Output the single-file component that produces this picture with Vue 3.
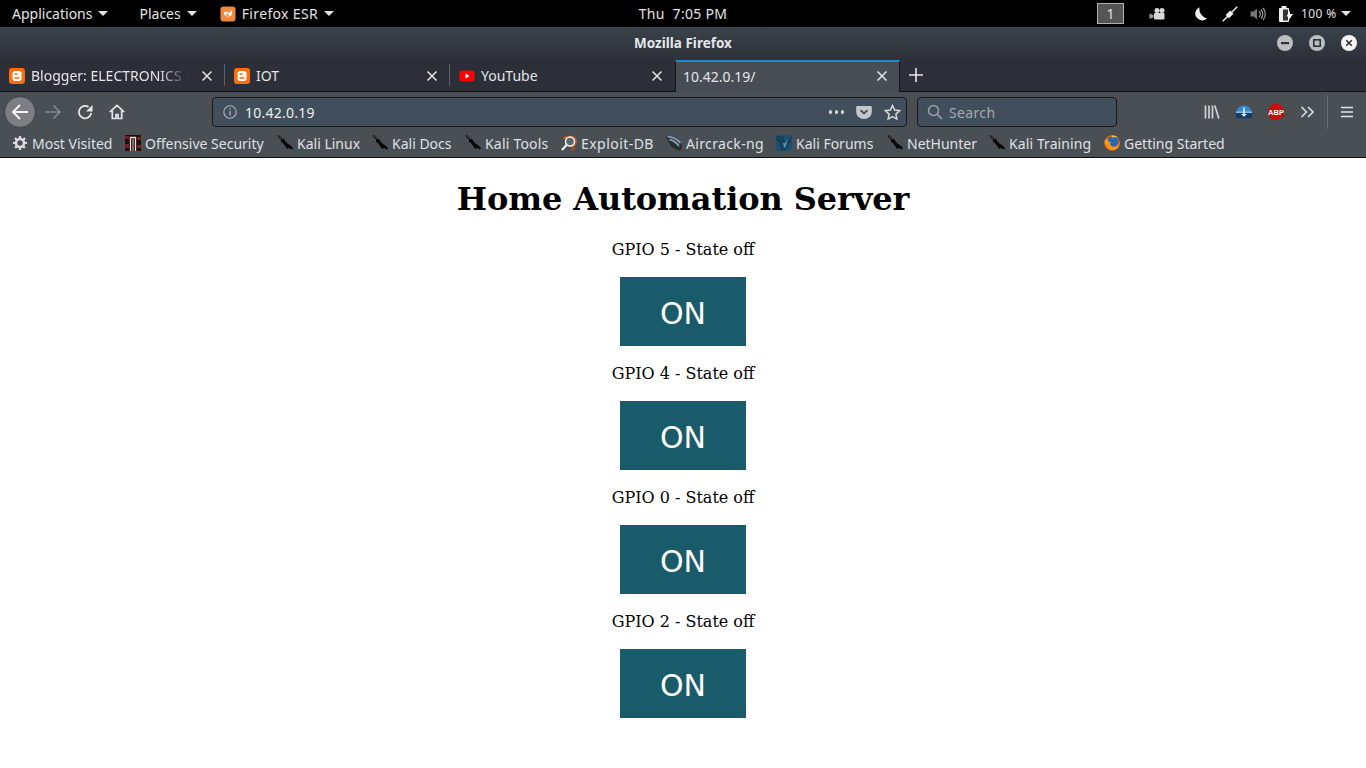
<template>
  <div class="top-panel">
    <div class="panel-left">
      <span class="menu apps">Applications<i class="caret"></i></span>
      <span class="menu places">Places<i class="caret"></i></span>
      <span class="menu ff">
        <svg width="16" height="16" viewBox="0 0 16 16"><rect x="0.500" y="0.500" width="15" height="15" rx="3" fill="#f08a3c"/><path d="M4 6.500a4 4 0 1 0 8 0c0-1-.4-2-1.200-2.700.2 1.200-.2 2.500-1.300 3-1.100.4-2.200-.1-2.500-1.300-.6.2-1.600.3-3 1z" fill="#fff"/><circle cx="7.500" cy="9" r="1.300" fill="#f08a3c"/></svg>
        <span class="ff-label">Firefox ESR</span><i class="caret"></i>
      </span>
    </div>
    <div class="clock">Thu&nbsp; 7:05 PM</div>
    <div class="panel-right">
      <span class="workspace">1</span>
      <svg class="video" width="16" height="14" viewBox="0 0 16 14"><circle cx="8" cy="3.500" r="2.500" fill="#d8d8d8"/><circle cx="13" cy="3.500" r="2.500" fill="#d8d8d8"/><rect x="5" y="6" width="10.500" height="6.500" rx="1" fill="#d8d8d8"/><path d="M0.500 6.500 4.500 8v2.500l-4 1.500z" fill="#999"/></svg>
      <svg class="moon" width="12" height="14" viewBox="0 0 12 14"><path d="M4.500.2A6.900 6.900 0 1 0 12 11.500 10 10 0 0 1 4.500.2z" fill="#eee"/></svg>
      <svg class="plug" width="16" height="16" viewBox="0 0 16 16"><path d="M.8 15.200 15.200.8" stroke="#eee" stroke-width="1.500"/><path d="M5.300 10.700 9.800 6.200" stroke="#eee" stroke-width="4.600"/></svg>
      <svg class="speaker" width="16" height="16" viewBox="0 0 16 16"><path d="M0.500 5.500h3l3.500-3v11l-3.500-3h-3z" fill="#777"/><path d="M9 5a4 4 0 0 1 0 6M11 3.500a6.500 6.500 0 0 1 0 9M13 2a9 9 0 0 1 0 12" fill="none" stroke="#999" stroke-width="1.200"/></svg>
      <svg class="battery" width="16" height="16" viewBox="0 0 16 16"><rect x="3.500" y="0" width="5" height="2" fill="#eee"/><rect x="1" y="2" width="10" height="14" rx="1" fill="#eee"/><path d="M5 3.500h5v11H5z" fill="#333"/><path d="M12 4.500l-3.500 6H11L10 15l5-7h-3z" fill="#fff"/></svg>
      <span class="percent">100 %</span><i class="caret"></i>
    </div>
  </div>

  <div class="titlebar">
    <span class="title">Mozilla Firefox</span>
    <div class="win-btns">
      <span class="win-btn"><svg width="16" height="16" viewBox="0 0 16 16"><circle cx="8" cy="8" r="8" fill="#bcbec0"/><rect x="4" y="7" width="8" height="2.200" fill="#2e3238"/></svg></span>
      <span class="win-btn"><svg width="16" height="16" viewBox="0 0 16 16"><circle cx="8" cy="8" r="8" fill="#bcbec0"/><rect x="4.800" y="4.800" width="6.400" height="6.400" fill="none" stroke="#2e3238" stroke-width="1.600"/></svg></span>
      <span class="win-btn"><svg width="16" height="16" viewBox="0 0 16 16"><circle cx="8" cy="8" r="8" fill="#f4f4f4"/><path d="M5.200 5.200l5.600 5.600M10.800 5.200l-5.600 5.600" stroke="#2e3238" stroke-width="1.600"/></svg></span>
    </div>
  </div>

  <div class="tabbar">
    <div v-for="tab in tabs" :key="tab.title" class="tab" :class="{ active: tab.active, sep: tab.sep }">
      <svg v-if="tab.icon === 'blogger'" class="fav" width="16" height="16" viewBox="0 0 16 16"><rect width="16" height="16" rx="3" fill="#ff6d0a"/><rect x="3.500" y="3" width="9" height="10" rx="2.500" fill="#fff"/><rect x="5.500" y="5.200" width="3" height="1.600" fill="#ff6d0a"/><rect x="5.500" y="9.200" width="5" height="1.600" fill="#ff6d0a"/></svg>
      <svg v-if="tab.icon === 'youtube'" class="fav" width="16" height="16" viewBox="0 0 16 16"><rect x="0.500" y="2.500" width="15" height="11" rx="3" fill="#f00"/><path d="M6.500 5.500v5l4-2.500z" fill="#fff"/></svg>
      <span class="tab-title" :class="{ fade: tab.fade }">{{ tab.title }}</span>
      <svg class="tab-close" width="12" height="12" viewBox="0 0 12 12"><path d="M1.500 1.500l9 9M10.500 1.500l-9 9" stroke="#e4e6e8" stroke-width="1.500"/></svg>
    </div>
    <svg class="new-tab" width="14" height="14" viewBox="0 0 14 14"><path d="M7 0v14M0 7h14" stroke="#e8e8e8" stroke-width="1.600"/></svg>
  </div>

  <div class="navbar">
    <span class="back">
      <svg width="20" height="20" viewBox="0 0 20 20"><path d="M18 10H3M10 3l-7 7 7 7" fill="none" stroke="#f2f2f2" stroke-width="2"/></svg>
    </span>
    <svg class="fwd" width="18" height="18" viewBox="0 0 18 18"><path d="M1 9h15M9.500 2.500 16 9l-6.500 6.500" fill="none" stroke="#85898d" stroke-width="1.600"/></svg>
    <svg class="reload" width="16" height="16" viewBox="0 0 16 16"><path d="M14.200 9A6.200 6.200 0 1 1 11.500 3" fill="none" stroke="#e8e8e8" stroke-width="1.800"/><path d="M15.500 1v6.500H9z" fill="#e8e8e8"/></svg>
    <svg class="home" width="16" height="16" viewBox="0 0 16 16"><path d="M.8 8 8 1.300 15.200 8M3.300 6.500v8h3.700V10.500h2v4h3.700v-8" fill="none" stroke="#e8e8e8" stroke-width="1.700"/></svg>
    <div class="urlbar">
      <svg width="14" height="14" viewBox="0 0 14 14"><circle cx="7" cy="7" r="6.200" fill="none" stroke="#aeb4ba" stroke-width="1.100"/><path d="M7 6v4.500M7 3.300v1.500" stroke="#aeb4ba" stroke-width="1.300"/></svg>
      <span class="url">10.42.0.19</span>
      <span class="dots"><i></i><i></i><i></i></span>
      <svg class="pocket" width="16" height="16" viewBox="0 0 16 16"><path d="M1 2h14a.8.8 0 0 1 .8.800V8a7.800 7 0 0 1-15.600 0V2.800A.8.800 0 0 1 1 2z" fill="#c4c8cc"/><path d="M4.600 6.300 8 9.500l3.400-3.200" fill="none" stroke="#46525e" stroke-width="1.900"/></svg>
      <svg class="star" width="17" height="17" viewBox="0 0 17 17"><path d="M8.500 1.500l2.100 4.600 5 .6-3.700 3.400 1 5-4.400-2.500-4.400 2.500 1-5L1.400 6.700l5-.6z" fill="none" stroke="#d4d7da" stroke-width="1.500"/></svg>
    </div>
    <div class="searchbar">
      <svg width="16" height="16" viewBox="0 0 16 16"><circle cx="6.500" cy="6.500" r="5" fill="none" stroke="#9aa2aa" stroke-width="1.500"/><path d="M10 10l5 5" stroke="#9aa2aa" stroke-width="1.700"/></svg>
      <span class="search-text">Search</span>
    </div>
    <div class="tools">
      <svg width="16" height="16" viewBox="0 0 16 16"><path d="M1.500 1.500v13M5 1.500v13M8.500 1.500v13M10.800 1.500l4 13" fill="none" stroke="#d0d2d4" stroke-width="1.700"/></svg>
      <svg width="16" height="16" viewBox="0 0 16 16"><path d="M.5 8C1 4.500 3.500 1.500 8 1.500s7 3 7.500 6.500z" fill="#3488cf"/><path d="M0 8h16v5.500l-1 1H1l-1-1z" fill="#143f66"/><path d="M0 7.500h16V9H0z" fill="#8dbadf"/><path d="M7.200 3.500h1.600v6.500H11l-3 2.800L5 10h2.200z" fill="#dfecf6"/></svg>
      <svg width="16" height="16" viewBox="0 0 16 16"><path d="M4.800 0h6.400L16 4.800v6.400L11.200 16H4.800L0 11.200V4.800z" fill="#c70d0d"/><text x="8" y="11" text-anchor="middle" class="abp">ABP</text></svg>
      <svg width="14" height="12" viewBox="0 0 14 12"><path d="M1.500 1l5 5-5 5M8 1l5 5-5 5" fill="none" stroke="#d8dadc" stroke-width="1.700"/></svg>
      <span class="tool-sep"></span>
      <svg width="12" height="12" viewBox="0 0 12 12"><path d="M0 1.500h12M0 6h12M0 10.500h12" stroke="#e4e6e8" stroke-width="1.600"/></svg>
    </div>
  </div>

  <div class="bookmarks">
    <span v-for="b in bookmarks" :key="b.name" class="bookmark">
      <svg v-if="b.icon === 'gear'" width="16" height="16" viewBox="0 0 16 16"><circle cx="8" cy="8" r="4" fill="none" stroke="#dcdcdc" stroke-width="2.600"/><path d="M8 1v14M1 8h14M3 3l10 10M13 3 3 13" stroke="#dcdcdc" stroke-width="2.200" stroke-dasharray="2.800 8.400 2.800"/></svg>
      <svg v-else-if="b.icon === 'offsec'" width="16" height="16" viewBox="0 0 16 16"><rect width="16" height="16" fill="#1f0c0d"/><path d="M0 1h4v3H0zM12 2h4v3h-4zM0 9h4v4H0zM12 10h4v3h-4z" fill="#7a1d1d"/><path d="M5.500 16V2.500h5V16" fill="none" stroke="#e8dcd8" stroke-width="1.300"/><path d="M8 4v12" stroke="#d8c4c0" stroke-width="1"/></svg>
      <svg v-else-if="b.icon === 'kali'" width="16" height="16" viewBox="0 0 16 16"><path d="M.5 0 4 1l1 1.500L7 4l2 3 2 2 2 1 3 3-1 1.500-3-1.500-2 1-2-3-2-3-2-1V4L2 3z" fill="#070707"/><path d="M2 .8 6 4" stroke="#8a8a8a" stroke-width=".7"/></svg>
      <svg v-else-if="b.icon === 'exploit'" width="16" height="16" viewBox="0 0 16 16"><path d="M2 4 4 1l3 .5L11 .5 15 3l1 4-2 4-3 2-2-1 2-8z" fill="#c9581c"/><circle cx="9" cy="6.500" r="4.500" fill="#5a6870" stroke="#f0f0f0" stroke-width="1.500"/><path d="M5.500 10 1 15" stroke="#f0f0f0" stroke-width="2.200"/><path d="M10 15.500l4-2.500" stroke="#c9581c" stroke-width="1.200"/></svg>
      <svg v-else-if="b.icon === 'aircrack'" width="16" height="16" viewBox="0 0 16 16"><path d="M0 .5C6 0 12 2 15 7.500c1.200 3 .8 6.500 0 8-5 0-10-3-12-7.500C1.500 5 .5 3 0 .5z" fill="#2a2d2a"/><path d="M1.500 1.500c5 .4 9.500 2.500 13 6.500M3.500 4.500c3.500.8 7 3 9.500 6.500" fill="none" stroke="#7f9ab5" stroke-width="2"/></svg>
      <svg v-else-if="b.icon === 'forums'" width="16" height="16" viewBox="0 0 16 16"><rect width="16" height="16" fill="#1d5273"/><path d="M0 1h7.500l1.500 6L16 1v2l-4 9-3 4H5L3 8 0 5z" fill="#16425d"/><path d="M7 8h2l3-4-2 7-2 2z" fill="#5a90b0"/></svg>
      <svg v-else-if="b.icon === 'firefox'" width="16" height="16" viewBox="0 0 16 16"><circle cx="8" cy="8" r="7.800" fill="#e55a17"/><circle cx="8.800" cy="6.500" r="5.500" fill="#2968b2"/><path d="M.5 6c.5 6 5 10 10 9 3.500-1 5.500-4 5-8-1 3.500-4 5.500-7 4.500C6 10.500 5.500 8.500 7 7.500 5 7 3.500 6 3.500 3.500 2 4 1 5 .5 6z" fill="#f6951e"/><path d="M7 1c2-1 5-.5 7 1.500-2-.6-4-.8-5.500 0z" fill="#f6c13a"/></svg>
      <span class="bm-text" :style="{ width: b.width + 'px', letterSpacing: (b.spacing || 0) + 'px' }">{{ b.name }}</span>
    </span>
  </div>

  <div class="page">
    <h1>Home Automation Server</h1>
    <template v-for="pin in pins" :key="pin">
      <p>GPIO {{ pin }} - State off</p>
      <p><a href="#"><button class="button">ON</button></a></p>
    </template>
  </div>
</template>

<script setup>
const tabs = [
  { title: 'Blogger: ELECTRONICS /', icon: 'blogger', fade: true },
  { title: 'IOT', icon: 'blogger', sep: true },
  { title: 'YouTube', icon: 'youtube', sep: true },
  { title: '10.42.0.19/', active: true },
]

// widths measured off the screenshot, the installed font runs a bit narrower
const bookmarks = [
  { name: 'Most Visited', icon: 'gear', width: 81 },
  { name: 'Offensive Security', icon: 'offsec', width: 120 },
  { name: 'Kali Linux', icon: 'kali', width: 63 },
  { name: 'Kali Docs', icon: 'kali', width: 61 },
  { name: 'Kali Tools', icon: 'kali', width: 64, spacing: 0.2 },
  { name: 'Exploit-DB', icon: 'exploit', width: 73, spacing: 0.45 },
  { name: 'Aircrack-ng', icon: 'aircrack', width: 78, spacing: 0.35 },
  { name: 'Kali Forums', icon: 'forums', width: 79 },
  { name: 'NetHunter', icon: 'kali', width: 70 },
  { name: 'Kali Training', icon: 'kali', width: 83, spacing: 0.1 },
  { name: 'Getting Started', icon: 'firefox', width: 101 },
]

const pins = [5, 4, 0, 2]
</script>

<style>
html, body {
  margin: 0;
  background: #fff;
}
</style>

<style scoped>
.top-panel {
  height: 27px;
  background: #000;
  color: #e2e2e2;
  font: 14px "Noto Sans", sans-serif;
  display: grid;
  grid-template-columns: 1fr auto 1fr;
  align-items: center;
}

.panel-left {
  display: flex;
  align-items: center;
  padding-left: 12px;
}

.menu {
  display: flex;
  align-items: center;
}

.places {
  margin-left: 31px;
}

.ff {
  margin-left: 23px;
  gap: 6px;
}

.ff .caret {
  margin-left: 0;
}

.ff-label {
  letter-spacing: 0.35px;
}

.caret {
  display: inline-block;
  width: 0;
  height: 0;
  margin-left: 6px;
  border-left: 5px solid transparent;
  border-right: 5px solid transparent;
  border-top: 5px solid #e2e2e2;
}

.clock {
  letter-spacing: 0.3px;
}

.panel-right {
  display: flex;
  align-items: center;
  justify-content: flex-end;
  padding-right: 15px;
}

.panel-right .caret {
  margin-left: 5px;
}

.workspace {
  width: 27px;
  height: 21px;
  box-sizing: border-box;
  border: 1px solid #b0b0b0;
  background: #555;
  text-align: center;
  line-height: 19px;
  margin-right: 25px;
}

.video { margin-right: 30px; }
.moon { margin-right: 15px; }
.plug { margin-right: 12px; }
.speaker { margin-right: 12px; }
.battery { margin-right: 7px; }

.percent {
  font-size: 12px;
  letter-spacing: 0.4px;
  width: 35px;
  white-space: nowrap;
}

.titlebar {
  height: 33px;
  box-sizing: border-box;
  padding-bottom: 2px;
  background: linear-gradient(#3a424a, #2d3038);
  display: flex;
  align-items: center;
  justify-content: center;
  position: relative;
  color: #e4e6e8;
  font: bold 13.500px "Noto Sans", sans-serif;
}

.win-btns {
  position: absolute;
  right: 9px;
  top: 8px;
  display: flex;
  gap: 16px;
}

.win-btn {
  display: block;
  height: 16px;
}

.tabbar {
  height: 32px;
  box-sizing: border-box;
  background: #2c2f38;
  border-bottom: 1px solid #111418;
  display: flex;
  color: #e4e6e8;
  font: 14px "Noto Sans", sans-serif;
}

.tab {
  width: 225px;
  flex: none;
  box-sizing: border-box;
  display: flex;
  align-items: center;
  padding: 0 12px 0 9px;
  gap: 6px;
  position: relative;
}

.tab.sep::before {
  content: '';
  position: absolute;
  left: -1px;
  top: 4px;
  bottom: 5px;
  width: 1px;
  background: #5a5f66;
}

.tab.active {
  background: #484d53;
  border-top: 2px solid #1b8ad0;
  border-left: 1px solid #111418;
  border-right: 1px solid #111418;
  height: 32px;
  padding-left: 7px;
  padding-right: 11px;
  padding-bottom: 2px;
}

.tab-title {
  flex: 1;
  min-width: 0;
  white-space: nowrap;
}

.tab-title.fade {
  -webkit-mask-image: linear-gradient(to right, #000 78%, transparent 96%);
  mask-image: linear-gradient(to right, #000 78%, transparent 96%);
}

.new-tab {
  margin: 8px 0 0 9px;
}

.navbar {
  height: 37px;
  box-sizing: border-box;
  background: #4a4f54;
  display: flex;
  align-items: center;
  padding: 3px 0 0 4px;
  color: #eee;
  font: 14px "Noto Sans", sans-serif;
}

.back {
  width: 32px;
  height: 32px;
  box-sizing: border-box;
  border: 1px solid #3a3e42;
  border-radius: 50%;
  background: #7b7f83;
  display: flex;
  align-items: center;
  justify-content: center;
}

.fwd { margin-left: 8px; }
.reload { margin-left: 15px; }
.home { margin-left: 16px; }

.urlbar, .searchbar {
  height: 30px;
  box-sizing: border-box;
  background: #414e5b;
  border: 1px solid #16191d;
  border-radius: 4px;
  display: flex;
  align-items: center;
}

.urlbar {
  width: 695px;
  margin-left: 87px;
  padding: 0 5px 0 10px;
}

.url {
  margin-left: 8px;
  flex: 1;
  letter-spacing: 0.25px;
}

.dots {
  display: flex;
  gap: 2.500px;
  margin-right: 12px;
}

.dots i {
  width: 3.500px;
  height: 3.500px;
  border-radius: 50%;
  background: #d4d7da;
}

.star { margin-left: 12px; }

.searchbar {
  width: 200px;
  margin-left: 10px;
  padding-left: 9px;
  gap: 6px;
  color: #a4abb2;
}

.search-text {
  letter-spacing: 0.35px;
}

.tools {
  display: flex;
  align-items: center;
  margin-left: 87px;
  gap: 16px;
}

.tool-sep {
  width: 1px;
  height: 34px;
  background: #6b6f74;
  margin: 0 -3px 0 -3px;
}

.abp {
  font: bold 7.500px "Liberation Sans", sans-serif;
  fill: #fff;
}

.bookmarks {
  height: 29px;
  box-sizing: border-box;
  background: #4a4f54;
  border-bottom: 1px solid #0d0f11;
  display: flex;
  align-items: center;
  padding-left: 12px;
  gap: 12px;
  color: #dfe1e3;
  font: 14px "Noto Sans", sans-serif;
}

.bookmark {
  display: flex;
  align-items: center;
  gap: 4px;
  white-space: nowrap;
}

.page {
  text-align: center;
  font-family: "DejaVu Serif", serif;
  font-size: 16px;
  color: #000;
}

.page h1 {
  font-size: 32px;
  letter-spacing: -0.1px;
  margin: 22.440px 0 21.440px;
}

.page p {
  margin: 16px 0;
}

.button {
  background-color: #195b6a;
  border: none;
  color: #fff;
  padding: 19px 40px 15px;
  font-family: "DejaVu Sans", sans-serif;
  font-size: 30px;
  margin: 2px;
  cursor: pointer;
}
</style>
